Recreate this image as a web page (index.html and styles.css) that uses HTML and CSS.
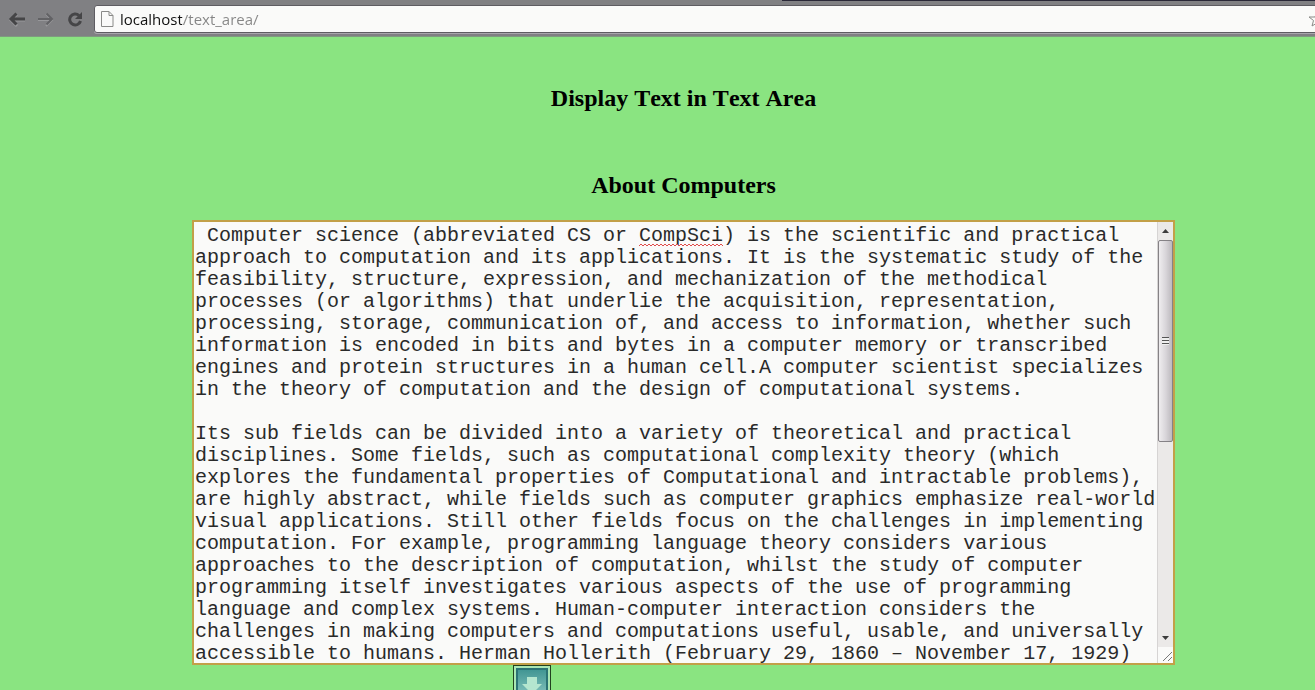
FILE: index.html
```html
<!DOCTYPE html>
<html lang="en">
<head>
<meta charset="UTF-8">
<meta name="viewport" content="width=device-width, initial-scale=1.0">
<title>Display Text in Text Area</title>
<link rel="stylesheet" href="styles.css">
</head>

<body>
<header class="toolbar">
  <button class="nav-button" type="button" aria-label="Back">
    <svg width="18" height="16" viewBox="0 0 18 16"><path class="glow" d="M17 9H4M9 3L3 9l6 6"/><path d="M17 8H3M8.500 2.500L3 8l5.500 5.500"/></svg>
  </button>
  <button class="nav-button forward" type="button" aria-label="Forward">
    <svg width="18" height="16" viewBox="0 0 18 16"><path class="glow" d="M1 9h13M9 3l6 6-6 6"/><path d="M1 8h14M9.500 2.500L15 8l-5.500 5.500"/></svg>
  </button>
  <button class="nav-button reload" type="button" aria-label="Reload">
    <svg width="18" height="16" viewBox="0 0 18 16"><path d="M13 4.500A5.500 5.500 0 1 0 14.500 10"/><path class="solid" d="M16 1v7H9z"/></svg>
  </button>
  <div class="address-bar">
    <svg class="page-icon" width="13" height="16" viewBox="0 0 13 16"><path d="M1 .5h7l4 4v11H.5V.5zM8 .5v4h4"/></svg>
    <input class="address" type="text" value="localhost/text_area/" aria-label="Address" spellcheck="false">
    <svg class="star" width="18" height="16" viewBox="0 0 18 16"><path d="M9 1l2 5h6l-4.500 3.500L14 15l-5-3-5 3 1.500-5.500L1 6h6z"/></svg>
  </div>
</header>

<main class="page">
  <h2>Display Text in Text Area</h2>
  <h2><label for="about">About Computers</label></h2>
  <div class="text-frame">
    <textarea class="about" id="about" spellcheck="false">
 Computer science (abbreviated CS or CompSci) is the scientific and practical approach to computation and its applications. It is the systematic study of the feasibility, structure, expression, and mechanization of the methodical processes (or algorithms) that underlie the acquisition, representation, processing, storage, communication of, and access to information, whether such information is encoded in bits and bytes in a computer memory or transcribed engines and protein structures in a human cell.A computer scientist specializes in the theory of computation and the design of computational systems.

Its sub fields can be divided into a variety of theoretical and practical disciplines. Some fields, such as computational complexity theory (which explores the fundamental properties of Computational and intractable problems), are highly abstract, while fields such as computer graphics emphasize real-world visual applications. Still other fields focus on the challenges in implementing computation. For example, programming language theory considers various approaches to the description of computation, whilst the study of computer programming itself investigates various aspects of the use of programming language and complex systems. Human-computer interaction considers the challenges in making computers and computations useful, usable, and universally accessible to humans. Herman Hollerith (February 29, 1860 – November 17, 1929)</textarea>
    <svg class="squiggle" width="84" height="4">
      <defs>
        <pattern id="wave" width="4" height="4" patternUnits="userSpaceOnUse"><path d="M0 3l2-2 2 2"/></pattern>
      </defs>
      <rect width="84" height="4" fill="url(#wave)"/>
    </svg>
    <div class="scrollbar">
      <svg class="arrow" width="15" height="18" viewBox="0 0 15 18"><path d="M4 11h7L7.500 7z"/></svg>
      <div class="track"><div class="thumb"><span class="grip"></span></div></div>
      <svg class="arrow" width="15" height="18" viewBox="0 0 15 18"><path d="M4 7h7l-3.500 4z"/></svg>
      <svg class="resizer" width="15" height="16" viewBox="0 0 15 16"><path d="M5 14l9-9M10 14l4-4"/></svg>
    </div>
  </div>
  <button class="download" type="button" aria-label="Download">
    <svg width="32" height="32" viewBox="0 0 32 32">
      <defs>
        <linearGradient id="teal" x2="0" y2="1">
          <stop offset="0" stop-color="#3f9492"/>
          <stop offset="1" stop-color="#8cc9c2"/>
        </linearGradient>
      </defs>
      <rect x="1" y="1" width="30" height="30" fill="url(#teal)" stroke="#2b7374" stroke-width="2"/>
      <path d="M11 9h10v7h5L16 26 6 16h5z" fill="#b4e6cf"/>
    </svg>
  </button>
</main>
</body>
</html>
```
FILE: styles.css
```css
* {
  box-sizing: border-box;
}

body {
  margin: 0;
  height: 100vh;
  overflow: hidden;
  background: #8ae481;
  color: #000;
  font-family: "Liberation Serif", "Times New Roman", serif;
}

/* Browser bar */
.toolbar {
  display: flex;
  align-items: center;
  height: 37px;
  padding: 1px 0 0 8px;
  background: linear-gradient(to right, transparent 782px, #2a2838 782px) top / 100% 1px no-repeat #808083;
  border-bottom: 1px solid #7f9a7f;
  overflow: hidden;
}

.nav-button {
  display: flex;
  flex: none;
  width: 29px;
  padding: 0;
  border: 0;
  background: none;
}

.nav-button path {
  fill: none;
  stroke: #454547;
  stroke-width: 3;
}

.nav-button .glow {
  stroke: #98989b;
}

.nav-button.forward path {
  stroke: #626265;
  stroke-width: 2;
}

.nav-button.forward .glow {
  stroke: #98989b;
}

.nav-button.reload {
  width: 28px;
}

.nav-button .solid {
  fill: #454547;
  stroke: none;
}

.address-bar {
  display: flex;
  flex: 1;
  align-items: center;
  gap: 5px;
  height: 28px;
  margin-right: -16px;
  padding-left: 6px;
  background: #fafaf9;
  border: 1px solid #5e5c62;
  border-radius: 3px 0 0 3px;
  box-shadow: 0 1px 0 #a9a6ad;
}

.address-bar svg {
  flex: none;
  fill: none;
  stroke: #8a8a88;
}

/* Host name in black, the path after it in grey */
.address {
  flex: 1;
  min-width: 0;
  padding: 0 0 0 1px;
  border: 0;
  outline: 0;
  background: linear-gradient(to right, #111 63px, #858585 63px);
  background-clip: text;
  -webkit-background-clip: text;
  color: transparent;
  font: 15px "Open Sans", sans-serif;
}

.star {
  margin-right: 4px;
}

/* Page */
.page {
  display: flex;
  flex-direction: column;
  align-items: center;
  padding: 48px 0 0 52px;
}

h2 {
  margin: 0 0 60px;
  font-size: 24px;
  line-height: 27px;
  font-kerning: none;
}

h2 + h2 {
  margin-bottom: 21px;
}

.text-frame {
  position: relative;
  display: flex;
  width: 100%;
  max-width: 983px;
  height: 445px;
  background: #fafaf9;
  border: 2px solid #c2a048;
}

.about {
  flex: 1;
  min-width: 0;
  padding: 3px 0 0 1px;
  border: 0;
  outline: 0;
  resize: none;
  overflow: hidden;
  background: none;
  color: #2a2a2a;
  font: 20px/22px "Liberation Mono", "Courier New", monospace;
}

.squiggle {
  position: absolute;
  top: 21px;
  left: 445px;
}

.squiggle path {
  fill: none;
  stroke: #e04a4a;
}

.scrollbar {
  display: flex;
  flex: none;
  flex-direction: column;
  width: 16px;
  background: #ebe9e8;
  border-left: 1px solid #d6d4d4;
}

.arrow {
  fill: #3c3c3c;
}

.track {
  flex: 1;
}

.thumb {
  display: flex;
  align-items: center;
  justify-content: center;
  height: 52%;
  background: linear-gradient(to right, #efedef, #d9d6da 50%, #bdb9be);
  border: 1px solid #858286;
  border-radius: 2px;
}

.grip {
  width: 7px;
  height: 8px;
  background: repeating-linear-gradient(#555 0 1px, #eee 1px 3px);
}

.resizer {
  background: #fafaf9;
  stroke: #777;
}

.download {
  display: flex;
  align-self: flex-start;
  margin-left: 461px;
  padding: 2px;
  border: 1px solid #22421f;
  background: #a9e6b4;
}
```
